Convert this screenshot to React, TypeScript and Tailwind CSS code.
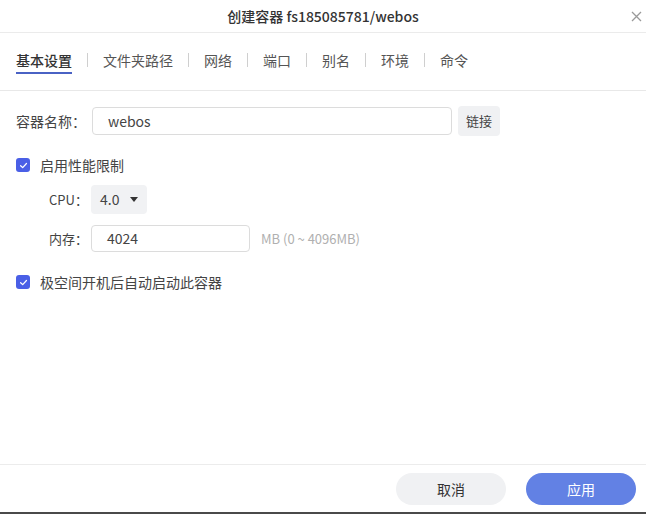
import React from "react";

const font = { fontFamily: '"Noto Sans CJK SC", "Noto Sans", sans-serif' };

const tabs = ["基本设置", "文件夹路径", "网络", "端口", "别名", "环境", "命令"];

function Check() {
  return (
    <span className="flex h-[14px] w-[14px] items-center justify-center rounded-[3px] bg-[#4a5fe6]">
      <svg width="9" height="9" viewBox="0 0 10 10" fill="none">
        <path d="M1.8 5.2 4.1 7.4 8.3 2.8" stroke="white" strokeWidth="1.4" strokeLinecap="round" strokeLinejoin="round" />
      </svg>
    </span>
  );
}

export default function App() {
  return (
    <div style={font} className="flex h-[514px] w-[646px] flex-col bg-white text-[#333]">
      <div className="relative flex h-[33px] shrink-0 items-center justify-center border-b border-[#ebebeb]">
        <span className="text-[14px] leading-[20px] font-medium text-[#333]">创建容器 fs185085781/webos</span>
        <svg className="absolute right-[4px] top-[11px]" width="11" height="11" viewBox="0 0 11 11">
          <path d="M1 1 10 10M10 1 1 10" stroke="#9a9a9a" strokeWidth="1.3" />
        </svg>
      </div>

      <div className="flex h-[58px] shrink-0 items-start border-b border-[#e8e8e8] px-[16px] pt-[17px]">
        {tabs.map((t, i) => (
          <React.Fragment key={t}>
            {i > 0 && <span className="mx-[15px] mt-[3px] h-[14px] w-px bg-[#cfcfcf]" />}
            <div className="flex flex-col">
              <span className={`text-[14px] leading-[20px] ${i === 0 ? "font-medium text-[#333]" : "text-[#555]"}`}>{t}</span>
              {i === 0 && <span className="mt-[2px] h-[2px] w-full bg-[#4a62c4]" />}
            </div>
          </React.Fragment>
        ))}
      </div>

      <div className="flex flex-1 flex-col px-[16px] pt-[15px]">
        <div className="flex items-center">
          <span className="w-[76px] text-[14px] leading-[20px] text-[#444]">容器名称：</span>
          <div className="flex h-[28px] w-[360px] items-center rounded-[4px] border border-[#dcdcdc] px-[15px] text-[14px] text-[#444]">
            webos
          </div>
          <button className="ml-[6px] h-[30px] w-[42px] rounded-[4px] bg-[#f0f1f3] text-[13px] text-[#444]">链接</button>
        </div>

        <div className="mt-[19px] flex h-[20px] items-center">
          <Check />
          <span className="ml-[10px] text-[14px] leading-[20px] text-[#444]">启用性能限制</span>
        </div>

        <div className="mt-[10px] flex items-center pl-[33px]">
          <span className="w-[42px] text-[13px] leading-[20px] text-[#444]">CPU：</span>
          <div className="flex h-[29px] w-[56px] items-center rounded-[4px] bg-[#f1f2f4] pl-[9px] text-[14px] text-[#444]">
            4.0
            <svg className="ml-[11px]" width="8" height="5" viewBox="0 0 8 5">
              <path d="M0 0H8L4 5Z" fill="#333" />
            </svg>
          </div>
        </div>

        <div className="mt-[11px] flex items-center pl-[33px]">
          <span className="w-[42px] text-[13px] leading-[20px] text-[#444]">内存：</span>
          <div className="flex h-[27px] w-[159px] items-center rounded-[4px] border border-[#dcdcdc] px-[15px] text-[14px] text-[#444]">
            4024
          </div>
          <span className="ml-[11px] text-[13px] text-[#b0b0b0]">MB (0 ~ 4096MB)</span>
        </div>

        <div className="mt-[20px] flex h-[20px] items-center">
          <Check />
          <span className="ml-[10px] text-[14px] leading-[20px] text-[#444]">极空间开机后自动启动此容器</span>
        </div>
      </div>

      <div className="flex h-[48px] shrink-0 items-start justify-end gap-[20px] border-t border-[#ececec] pr-[10px] pt-[8px]">
        <button className="h-[32px] w-[110px] rounded-full bg-[#f0f1f3] text-[14px] text-[#333]">取消</button>
        <button className="h-[32px] w-[110px] rounded-full bg-[#6281e4] text-[14px] text-white">应用</button>
      </div>
      <div className="h-[2px] shrink-0 bg-[#4a4a4a]" />
    </div>
  );
}
